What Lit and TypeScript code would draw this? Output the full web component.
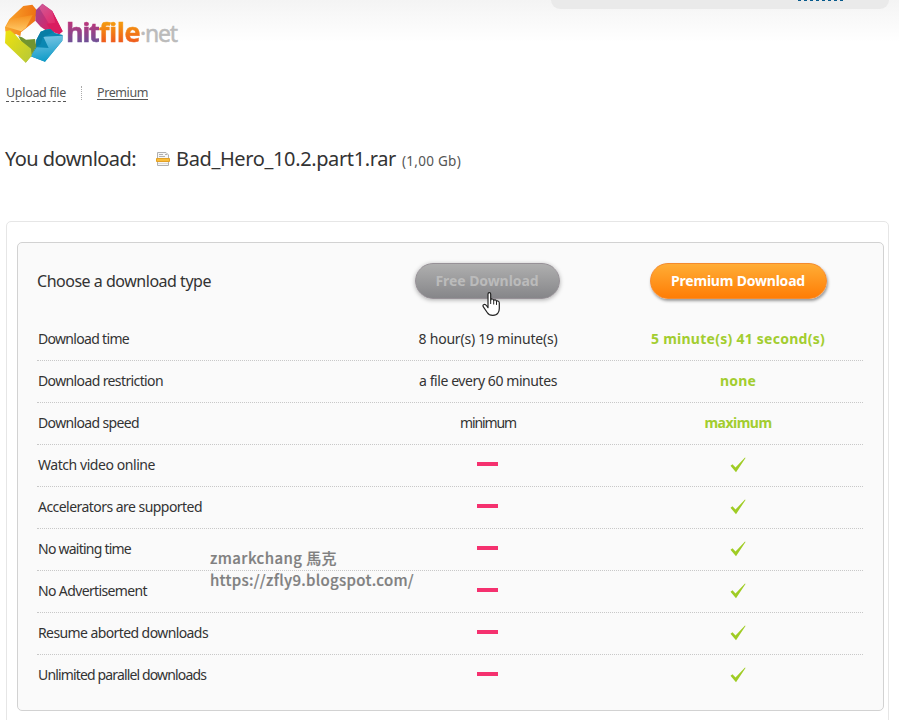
import { LitElement, html, css, svg } from "lit";
import { customElement, property } from "lit/decorators.js";

/** Single line of text tracked so that it fills the given width. */
@customElement("fit-text")
class FitText extends LitElement {
  @property({ type: Number }) w = 0;
  static styles = css`
    :host { display: inline-block; white-space: nowrap; }
    span { display: inline-block; white-space: pre; }
  `;
  @property() text = "";
  render() { return html`<span>${this.text}</span>`; }
  firstUpdated() {
    const s = this.renderRoot.querySelector("span") as HTMLElement;
    const gap = (this.w - s.getBoundingClientRect().width) / this.text.length;
    s.style.letterSpacing = gap.toFixed(3) + "px";
  }
}

type Row = { label: string; w: number; free?: [string, number]; premium?: [string, number] };
const ROWS: Row[] = [
  { label: "Download time", w: 91, free: ["8 hour(s) 19 minute(s)", 139], premium: ["5 minute(s) 41 second(s)", 174] },
  { label: "Download restriction", w: 125, free: ["a file every 60 minutes", 138], premium: ["none", 36] },
  { label: "Download speed", w: 101, free: ["minimum", 56], premium: ["maximum", 67] },
  { label: "Watch video online", w: 117 },
  { label: "Accelerators are supported", w: 164 },
  { label: "No waiting time", w: 93 },
  { label: "No Advertisement", w: 109 },
  { label: "Resume aborted downloads", w: 170 },
  { label: "Unlimited parallel downloads", w: 168 },
];

const t = (text: string, w: number) => html`<fit-text .text=${text} .w=${w}></fit-text>`;

const grad = (id: string, a: string, b: string, x2 = 1, y2 = 1) => svg`
  <linearGradient id=${id} x1="0" y1="0" x2=${x2} y2=${y2}>
    <stop offset="0" stop-color=${a}/><stop offset="1" stop-color=${b}/>
  </linearGradient>`;

const logo = html`<svg class="mark" viewBox="0 0 192 192" width="64" height="64">
  <defs>
    ${grad("o", "#f9a62c", "#ee7212", 1, 0)}${grad("of", "#f58f1d", "#ffc966", 0, 1)}
    ${grad("p", "#9c4a94", "#de1f63", 0.8, 0.5)}${grad("pf", "#cf5b98", "#e32b6b", 0.7, 1)}
    ${grad("b", "#82c8e6", "#129dc9", 0.2, 1)}${grad("y", "#f0e20d", "#b5c838")}
  </defs>
  <path fill="url(#o)" d="M15 82 28 58 70 18 97 14 110 30 106 62 80 83 63 97 61 109 48 102 38 109 16 94z"/>
  <path fill="url(#of)" d="M18 80 32 57 98 45 78 83 64 94z"/>
  <path fill="url(#p)" d="M108 30 127 11 157 33 188 94 178 103 160 97 150 88 136 90 122 80 106 62z"/>
  <path fill="url(#pf)" d="M127 11 157 33 172 76 146 70 118 24z"/>
  <path fill="#da1c60" d="M157 34 188 94 178 102 150 87 140 72 166 68z"/>
  <path fill="#0b87b2" d="M107 142 109 120 122 95 137 89 151 87 165 99 188 105 187 122 135 185 92 169z"/>
  <path fill="url(#b)" d="M130 110 188 107 187 122 135 185 92 169 110 142 146 144z"/>
  <path fill="#087da5" d="M109 120 122 95 137 89 151 87 160 97 128 112 122 133 108 141z"/>
  <path fill="#72942f" d="M55 108 66 112 78 119 105 117 109 140 92 169 77 188 66 130z"/>
  <path fill="url(#y)" d="M17 94 30 91 46 104 60 120 93 146 95 168 77 188 15 129z"/>
</svg>`;

const fileIcon = html`<svg class="file" width="14" height="16" viewBox="0 0 14 16">
  <path fill="#f6f6f6" stroke="#b0b0b0" d="M1.500 7V1.500H10L12.500 4V7M1.500 11v3.500h11V11"/>
  <path stroke="#b0b0b0" d="M3 3.500h4M3 5.500h6M9 3.500h2"/>
  <path stroke="#dadada" d="M2 12.500h10"/>
  <path fill="#f9bd3c" stroke="#e2a126" d="M.5 7.500h13v3H.5z"/>
</svg>`;

const check = html`<svg width="18" height="18" viewBox="0 0 18 18">
  <path fill="#9fcc24" d="M1.500 9.800 3.500 8.300 6.500 11.500 16 1.500 16.500 2 7 16.200z"/>
</svg>`;

const hand = html`<svg class="hand" width="20" height="26" viewBox="0 0 20 26">
  <path fill="#fff" stroke="#222" stroke-width="1.200" stroke-linejoin="round"
    d="M6 15V3.300Q6 1.700 7.300 1.700 8.700 1.700 8.700 3.300V9Q9 7.800 10.200 8 11.700 8.200 11.700 9.500 12 8.600 13.200 8.900 14.500 9.200 14.500 10.400 15 9.700 16 10 17.300 10.400 17.300 12V17.500Q17.300 20 16 22 14.500 24.400 10.800 24.400 7 24.400 5.200 21.500L1.200 15.700Q.5 14 2 13.500 3.500 13.200 4.800 15L6 16.700z"/>
  <path fill="none" stroke="#222" d="M8.700 9v4M11.700 9.500v4M14.500 10.400v3.500"/>
</svg>`;

@customElement("app-root")
class AppRoot extends LitElement {
  static styles = css`
    :host {
      display: block; position: relative; height: 720px; overflow: hidden; box-sizing: border-box;
      background: linear-gradient(#f4f4f4, #fff 42px) #fff;
      font: 14px/20px "Noto Sans", "Open Sans", sans-serif; color: #333;
    }
    svg { display: block; flex: none; }
    header { display: flex; justify-content: space-between; height: 82px; }
    .brand { display: flex; align-items: flex-start; }
    .name { display: flex; align-items: baseline; height: 40px; margin: 15px 0 0 2px; line-height: 34px; }
    .name span { font: 700 27px/34px "Open Sans", sans-serif; -webkit-text-stroke: .5px; }
    .name b { font: 23px/34px "Noto Sans", sans-serif; color: #bbb; -webkit-text-stroke: .5px #bbb; }
    .hit { background: linear-gradient(#b7377c 25%, #6f5197 80%); -webkit-background-clip: text; color: transparent; }
    .fl { background: linear-gradient(#f4980f 25%, #ef5b1d 80%); -webkit-background-clip: text; color: transparent; }
    .tab { width: 338px; height: 9px; margin-right: 10px; background: #eaeaea; border-radius: 0 0 9px 9px; display: flex; }
    .tab i { width: 46px; height: 1px; margin-left: 247px; background: repeating-linear-gradient(90deg, #075a8c 0 3px, transparent 3px 6px); }
    nav { display: flex; align-items: flex-start; height: 65px; padding-left: 6px; font-size: 12.500px; color: #555; }
    nav a { height: 17px; border-bottom: 1px solid #555; line-height: 21px; }
    nav a.up { height: 19px; border-bottom-style: dashed; }
    nav i { height: 14px; border-left: 1px dotted #aaa; margin: 4px 15px 0; }
    .title { display: flex; height: 24px; margin: 0; padding-left: 5px; font-size: 20px; font-weight: 400; line-height: 24px; color: #333; align-items: baseline; }
    .file { margin: 0 6px 0 20px; align-self: center; }
    .size { font-size: 13.500px; color: #555; margin-left: 6px; }
    .outer { margin: 50px 10px 0 6px; height: 520px; border: 1px solid #e6e6e6; border-radius: 5px; padding: 20px 4px 0 10px; box-sizing: border-box; }
    .panel { height: 469px; border: 1px solid #d2d2d2; border-radius: 5px; background: #fafafa; box-sizing: border-box; padding: 0 20px 0 19px; }
    .row { display: grid; grid-template-columns: 325px 250px 250px; height: 42px; box-sizing: border-box; align-items: center; border-bottom: 1px dotted #c8c8c8; padding: 0 0 2px 1px; }
    .row > * { justify-self: center; }
    .row > :first-child { justify-self: start; }
    .row:last-child { border-bottom: 0; padding-bottom: 3px; }
    .head { height: 76px; border: 0; padding: 0; font-size: 16px; }
    .good { color: #a2cd2f; font-weight: 700; }
    .dash { width: 21px; height: 4px; margin: 0 1px 2px 0; background: #f5316f; }
    .btn { display: flex; align-items: center; justify-content: center; box-sizing: border-box; height: 36px; border-radius: 18px; font-size: 14px; font-weight: 700; position: relative; }
    .free { width: 145px; color: #bbb; border: 1px solid #979197; background: linear-gradient(#afafaf, #868689); box-shadow: 0 1px 4px #aaa; }
    .prem { width: 177px; margin-left: 2px; color: #fff; border: 1px solid #f58a2d; background: linear-gradient(#ffad36, #ff7d05); box-shadow: 1px 2px 3px #999; }
    .hand { position: absolute; left: 66px; top: 27px; }
    .credit { position: absolute; left: 210px; top: 547px; font: 500 15px/22px "Noto Sans CJK TC", sans-serif; color: #808080; -webkit-text-stroke: .2px; }
    .credit fit-text { display: block; }
  `;

  render() {
    return html`
      <header>
        <div class="brand">${logo}
          <div class="name"><span class="hit">${t("hit", 33)}</span><span class="fl">${t("file", 41)}</span><b>${t("·net", 37)}</b></div>
        </div>
        <div class="tab"><i></i></div>
      </header>
      <nav><a class="up">${t("Upload file", 60)}</a><i></i><a>${t("Premium", 51)}</a></nav>
      <h1 class="title">${t("You download:", 131)}${fileIcon}${t("Bad_Hero_10.2.part1.rar", 220)}<span class="size">${t("(1,00 Gb)", 59)}</span></h1>
      <div class="outer"><div class="panel">
        <div class="row head">${t("Choose a download type", 174)}
          <div class="btn free">${t("Free Download", 103)}${hand}</div>
          <div class="btn prem">${t("Premium Download", 134)}</div>
        </div>
        ${ROWS.map((r) => html`<div class="row">
          ${t(r.label, r.w)}
          ${r.free ? t(...r.free) : html`<div class="dash"></div>`}
          <span class="good">${r.premium ? t(...r.premium) : check}</span>
        </div>`)}
      </div></div>
      <div class="credit">${t("zmarkchang 馬克", 127)}${t("https://zfly9.blogspot.com/", 204)}</div>`;
  }
}
